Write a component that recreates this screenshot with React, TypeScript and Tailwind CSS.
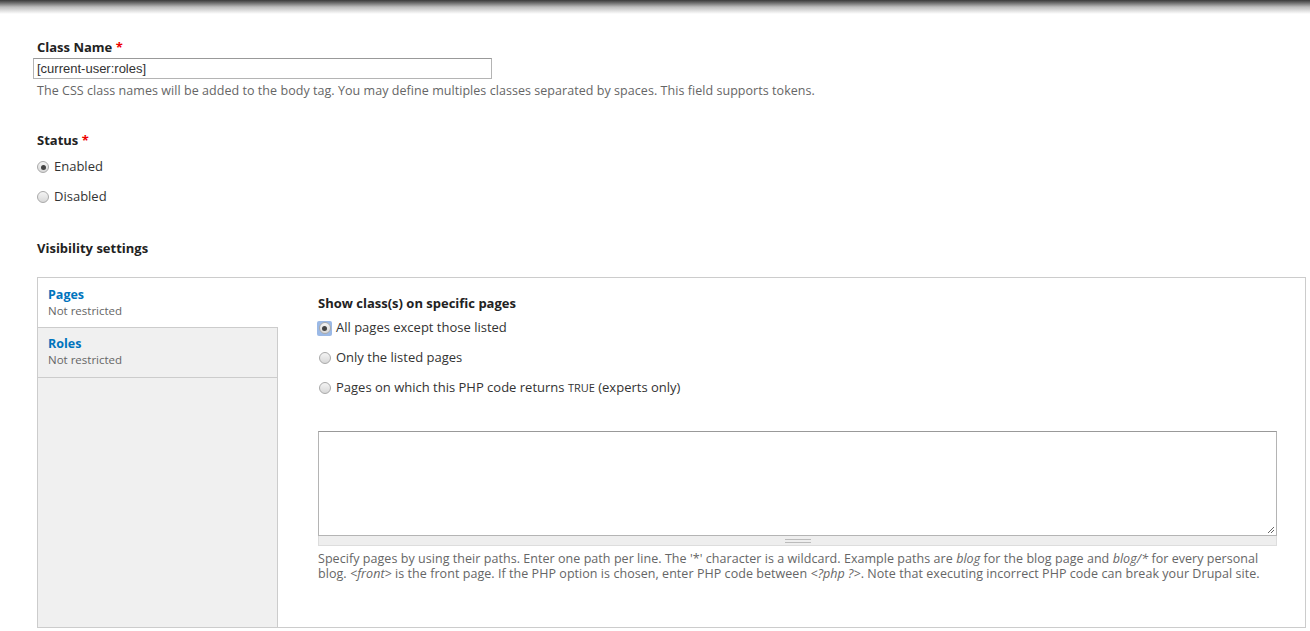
import React from "react";

function Radio({ checked, focused }: { checked?: boolean; focused?: boolean }) {
  const dot = (
    <span className="relative flex h-[12px] w-[12px] items-center justify-center rounded-full border border-[#a9a9a9] bg-gradient-to-b from-[#f4f4f4] to-[#d8d8d8]">
      {checked && <span className="h-[5px] w-[5px] rounded-full bg-[#444]" />}
    </span>
  );
  if (focused) {
    return (
      <span className="flex h-[15px] w-[15px] items-center justify-center rounded-[2px] bg-[#9bb9e6] -ml-[2px] -mr-[1px]">
        {dot}
      </span>
    );
  }
  return dot;
}

function RadioRow({ label, checked, focused }: { label: React.ReactNode; checked?: boolean; focused?: boolean }) {
  return (
    <div className="flex items-center gap-[5px] h-[16px] text-[13px] text-[#333]">
      <Radio checked={checked} focused={focused} />
      <span>{label}</span>
    </div>
  );
}

export default function App() {
  return (
    <div className="min-h-[631px] bg-white text-[#333]" style={{ fontFamily: '"Open Sans", "Noto Sans", sans-serif' }}>
      <div className="h-[14px] bg-gradient-to-b from-[#3a3a3a] via-[#bdbdbd] to-white" />
      <div className="pl-[37px] pr-[4px]">
        <div className="mt-[25px] text-[13px] font-bold leading-[16px] text-[#222]">
          Class Name <span className="text-[#e00]">*</span>
        </div>
        <div className="mt-[3px] -ml-[4px] h-[21px] w-[459px] border border-[#b4b4b4] border-t-[#999] bg-white px-[3px] text-[13px] leading-[19px] text-[#333]" style={{ fontFamily: '"Liberation Sans", Arial, sans-serif' }}>
          [current-user:roles]
        </div>
        <div className="mt-[4px] text-[12.5px] leading-[16px] text-[#666] tracking-[0.05px]">
          The CSS class names will be added to the body tag. You may define multiples classes separated by spaces. This field supports tokens.
        </div>

        <div className="mt-[33px] text-[13px] font-bold leading-[16px] text-[#222]">
          Status <span className="text-[#e00]">*</span>
        </div>
        <div className="mt-[11px] flex flex-col gap-[14px]">
          <RadioRow label="Enabled" checked />
          <RadioRow label="Disabled" />
        </div>

        <div className="mt-[35px] text-[13px] font-bold leading-[16px] text-[#222]">Visibility settings</div>

        <div className="mt-[21px] flex h-[351px] border border-[#ccc]">
          <div className="flex w-[240px] flex-col">
            <div className="h-[49px] bg-white px-[10px] pt-[9px] leading-[16px]">
              <div className="text-[12.5px] font-bold text-[#0074bd]">Pages</div>
              <div className="text-[11.5px] text-[#666]">Not restricted</div>
            </div>
            <div className="flex-1 border-r border-t border-[#ccc] bg-[#f0f0f0]">
              <div className="h-[50px] border-b border-[#ccc] px-[10px] pt-[8px] leading-[16px]">
                <div className="text-[12.5px] font-bold text-[#0074bd]">Roles</div>
                <div className="text-[11.5px] text-[#666]">Not restricted</div>
              </div>
            </div>
          </div>
          <div className="flex-1 pl-[40px] pr-[28px] pt-[17px]">
            <div className="text-[13px] font-bold leading-[16px] text-[#222]">Show class(s) on specific pages</div>
            <div className="mt-[9px] flex flex-col gap-[14px] pl-[1px]">
              <RadioRow label="All pages except those listed" checked focused />
              <RadioRow label="Only the listed pages" />
              <RadioRow
                label={
                  <>
                    Pages on which this PHP code returns <span className="text-[11px]">TRUE</span> (experts only)
                  </>
                }
              />
            </div>
            <div className="mt-[35px] relative">
              <div className="relative h-[105px] border border-[#b4b4b4] border-t-[#999] bg-white">
                <svg className="absolute bottom-[1px] right-[1px]" width="8" height="8" viewBox="0 0 8 8">
                  <line x1="1" y1="7" x2="7" y2="1" stroke="#666" strokeWidth="1" />
                  <line x1="4" y1="7" x2="7" y2="4" stroke="#666" strokeWidth="1" />
                </svg>
              </div>
              <div className="flex h-[10px] items-center justify-center border border-t-0 border-[#ddd] bg-[#eee]">
                <div className="flex w-[26px] flex-col gap-[2px]">
                  <div className="h-px bg-[#bbb]" />
                  <div className="h-px bg-[#bbb]" />
                </div>
              </div>
            </div>
            <div className="mt-[5px] text-[12.5px] leading-[15px] text-[#666] tracking-[0.05px]">
              Specify pages by using their paths. Enter one path per line. The '*' character is a wildcard. Example paths are <em>blog</em> for the blog page and <em>blog/*</em> for every personal blog. <em>&lt;front&gt;</em> is the front page. If the PHP option is chosen, enter PHP code between <em>&lt;?php ?&gt;</em>. Note that executing incorrect PHP code can break your Drupal site.
            </div>
          </div>
        </div>
      </div>
    </div>
  );
}
